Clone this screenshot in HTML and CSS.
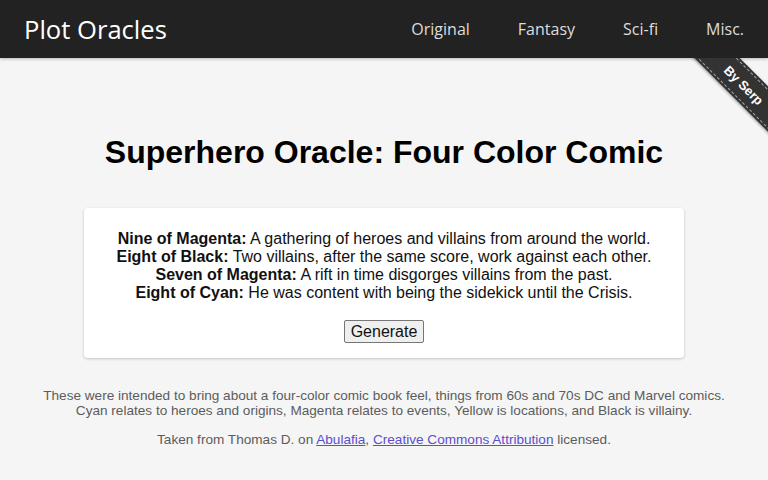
FILE: index.html
```html
<!DOCTYPE html>
<html>
<head>
<meta charset="utf-8">
<title>Superhero Oracle</title>
<link rel="stylesheet" href="styles.css">
</head>
<body>
<nav class="navbar">
  <a class="brand" href="#">Plot Oracles</a>
  <ul class="nav-links">
    <li><a href="#">Original</a></li>
    <li><a href="#">Fantasy</a></li>
    <li><a href="#">Sci-fi</a></li>
    <li><a href="#">Misc.</a></li>
  </ul>
</nav>
<div class="ribbon-wrap"><a class="ribbon" href="#">By Serp</a></div>
<main class="content">
  <h1 class="title">Superhero Oracle: Four Color Comic</h1>
  <section class="card">
    <div class="result">
      <div><b>Nine of Magenta:</b> A gathering of heroes and villains from around the world.</div>
      <div><b>Eight of Black:</b> Two villains, after the same score, work against each other.</div>
      <div><b>Seven of Magenta:</b> A rift in time disgorges villains from the past.</div>
      <div><b>Eight of Cyan:</b> He was content with being the sidekick until the Crisis.</div>
    </div>
    <button class="gen-btn" type="button">Generate</button>
  </section>
  <p class="note">These were intended to bring about a four-color comic book feel, things from 60s and 70s DC and Marvel comics.<br>Cyan relates to heroes and origins, Magenta relates to events, Yellow is locations, and Black is villainy.</p>
  <p class="note">Taken from Thomas D. on <a href="#">Abulafia</a>, <a href="#">Creative Commons Attribution</a> licensed.</p>
</main>
</body>
</html>
```

FILE: styles.css
```css
* { box-sizing: border-box; }
html, body { margin: 0; padding: 0; }
body {
  background: #f5f5f5;
  font-family: "Liberation Sans", Arial, sans-serif;
  color: #111;
  position: relative;
  overflow: hidden;
  height: 480px;
}
.navbar {
  height: 58px;
  background: #222;
  display: flex;
  align-items: center;
  justify-content: space-between;
  box-shadow: 0 1px 3px rgba(0,0,0,0.25);
  font-family: "Open Sans", sans-serif;
}
.brand {
  color: #fff;
  text-decoration: none;
  font-size: 25.6px;
  padding-left: 24px;
}
.nav-links {
  list-style: none;
  margin: 0;
  padding: 0;
  display: flex;
}
.nav-links a {
  display: block;
  color: #ddd;
  text-decoration: none;
  font-size: 16px;
  padding: 0 24px;
}
.ribbon-wrap {
  position: absolute;
  top: 58px;
  right: 0;
  width: 80px;
  height: 80px;
  overflow: hidden;
}
.ribbon {
  position: absolute;
  left: -14px;
  top: 11px;
  width: 140px;
  height: 32px;
  background: #333;
  transform: rotate(45deg);
  color: #fff;
  text-decoration: none;
  font-family: "Liberation Sans", Arial, sans-serif;
  font-weight: 700;
  font-size: 13px;
  display: flex;
  align-items: center;
  justify-content: center;
  box-shadow: 0 1px 3px rgba(0,0,0,0.4);
}
.ribbon::before, .ribbon::after {
  content: "";
  position: absolute;
  left: 0;
  right: 0;
  border-top: 1px dashed rgba(255,255,255,0.55);
}
.ribbon::before { top: 2px; }
.ribbon::after { bottom: 2px; }
.content {
  width: 600px;
  margin: 0 auto;
  padding-top: 75px;
}
.title {
  margin: 0 -60px 37px;
  text-align: center;
  font-size: 32px;
  line-height: 38px;
  font-weight: 700;
  color: #000;
}
.card {
  background: #fff;
  border-radius: 4px;
  box-shadow: 0 1px 3px rgba(0,0,0,0.2);
  padding: 22px 0 15px;
  text-align: center;
}
.result {
  font-size: 16px;
  line-height: 18px;
  color: #111;
  margin-bottom: 18px;
}
.gen-btn {
  font-family: "Liberation Sans", Arial, sans-serif;
  font-size: 16px;
  height: 23px;
  padding: 0 6px;
  background: #efefef;
  border: 1px solid #767676;
  border-radius: 2px;
  color: #111;
}
.note {
  margin: 30px -80px 0;
  text-align: center;
  font-size: 13.6px;
  line-height: 15px;
  color: #5c5c5c;
}
.note + .note { margin-top: 14px; }
.note a { color: #5a4fcf; }
```
